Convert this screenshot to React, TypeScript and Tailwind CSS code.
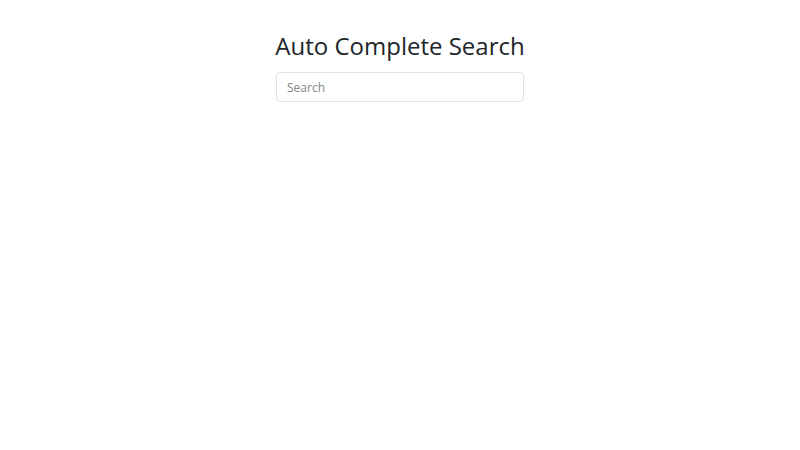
export default function App() {
  return (
    <div className="min-h-[450px] bg-white flex justify-center" style={{ fontFamily: '"Open Sans", "Noto Sans", sans-serif' }}>
      <div className="w-[248px] pt-[28px] flex flex-col items-center">
        <h1 className="text-[24px] leading-[36px] whitespace-nowrap text-[#212529] font-normal mb-[8px]">Auto Complete Search</h1>
        <input
          type="text"
          placeholder="Search"
          className="w-full h-[30px] px-[10px] text-[12px] border border-[#dee2e6] rounded-[4px] text-[#212529] placeholder:text-[#80868b] outline-none"
        />
      </div>
    </div>
  );
}
